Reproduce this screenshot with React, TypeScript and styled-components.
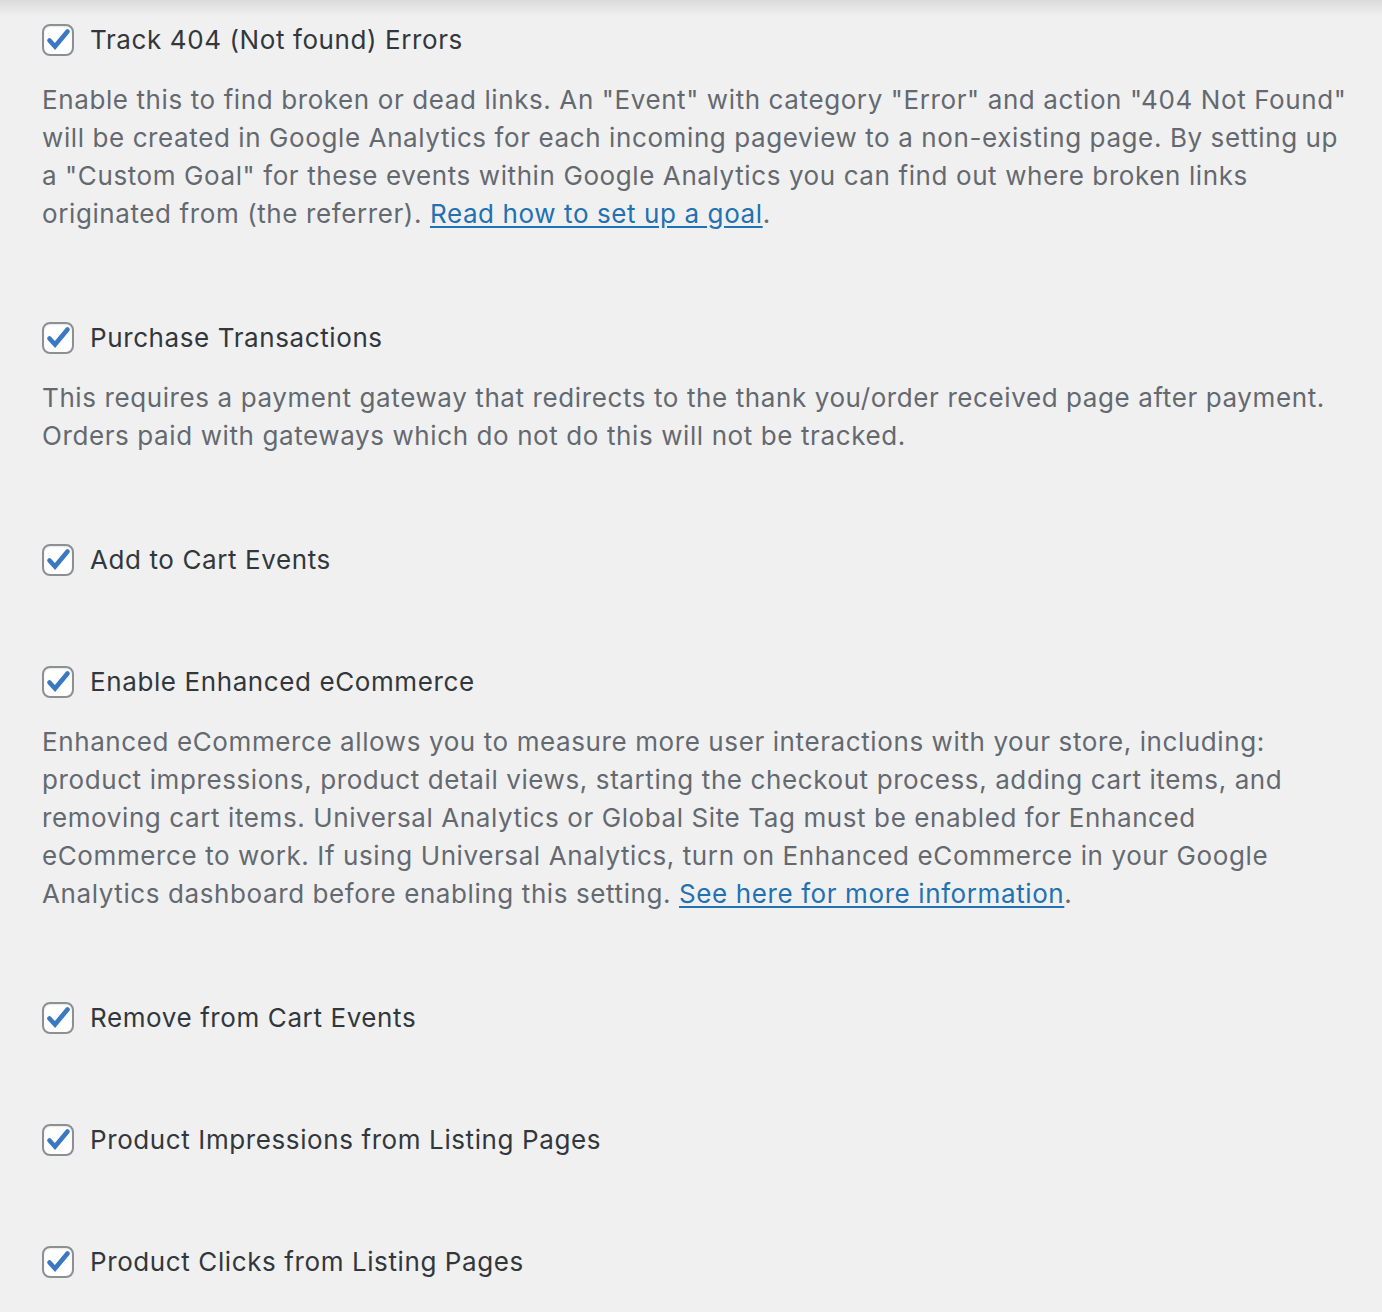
import React from 'react'
import styled, { createGlobalStyle } from 'styled-components'

const GlobalStyle = createGlobalStyle`
  html, body {
    margin: 0;
    padding: 0;
    background: #f0f0f1;
  }
`

const Page = styled.div`
  position: relative;
  min-height: 1312px;
  box-sizing: border-box;
  padding: 21px 30px 0 42px;
  background: #f0f0f1;
  font-family: Inter, 'Noto Sans', sans-serif;
  font-size: 26px;
  line-height: 38px;
  letter-spacing: 0.6px;
  display: flex;
  flex-direction: column;
  gap: 84px;

  &::before {
    content: '';
    position: absolute;
    top: 0;
    left: 0;
    right: 0;
    height: 16px;
    background: linear-gradient(to bottom, rgba(0, 0, 0, 0.09), rgba(0, 0, 0, 0));
  }
`

const Item = styled.div`
  display: flex;
  flex-direction: column;
  gap: 22px;
`

const Row = styled.label`
  display: flex;
  align-items: center;
  gap: 16px;
  color: #32373c;
`

const Box = styled.span`
  position: relative;
  flex: none;
  width: 32px;
  height: 32px;
  box-sizing: border-box;
  border: 2px solid #8c8f94;
  border-radius: 8px;
  background: #fff;
  box-shadow: inset 0 1px 2px rgba(0, 0, 0, 0.1);

  svg {
    position: absolute;
    left: -2px;
    top: -2px;
  }
`

const Desc = styled.p`
  margin: 0 0 2px;
  color: #646970;
`

const Link = styled.a`
  color: #2271b1;
  text-decoration: underline;
  text-underline-offset: 3px;
`

const Check = () => (
  <Box>
    <svg width="32" height="32" viewBox="0 0 32 32">
      <polyline
        points="7.5,16.5 13,22.5 25.5,7.5"
        fill="none"
        stroke="#3a78c2"
        strokeWidth="4.6"
        strokeLinejoin="miter"
        strokeLinecap="round"
      />
    </svg>
  </Box>
)

type Setting = { label: string; desc?: React.ReactNode }

const SETTINGS: Setting[] = [
  {
    label: 'Track 404 (Not found) Errors',
    desc: (
      <>
        Enable this to find broken or dead links. An "Event" with category "Error" and action "404 Not Found" will be
        created in Google Analytics for each incoming pageview to a non-existing page. By setting up a "Custom Goal" for
        these events within Google Analytics you can find out where broken links originated from (the referrer).{' '}
        <Link href="#">Read how to set up a goal</Link>.
      </>
    ),
  },
  {
    label: 'Purchase Transactions',
    desc: 'This requires a payment gateway that redirects to the thank you/order received page after payment. Orders paid with gateways which do not do this will not be tracked.',
  },
  { label: 'Add to Cart Events' },
  {
    label: 'Enable Enhanced eCommerce',
    desc: (
      <>
        Enhanced eCommerce allows you to measure more user interactions with your store, including: product impressions,
        product detail views, starting the checkout process, adding cart items, and removing cart items. Universal
        Analytics or Global Site Tag must be enabled for Enhanced eCommerce to work. If using Universal Analytics, turn
        on Enhanced eCommerce in your Google Analytics dashboard before enabling this setting.{' '}
        <Link href="#">See here for more information</Link>.
      </>
    ),
  },
  { label: 'Remove from Cart Events' },
  { label: 'Product Impressions from Listing Pages' },
  { label: 'Product Clicks from Listing Pages' },
]

const App = () => {
  return (
    <>
      <GlobalStyle />
      <Page>
        {SETTINGS.map((s) => (
          <Item key={s.label}>
            <Row>
              <Check />
              {s.label}
            </Row>
            {s.desc && <Desc>{s.desc}</Desc>}
          </Item>
        ))}
      </Page>
    </>
  )
}

export default App
